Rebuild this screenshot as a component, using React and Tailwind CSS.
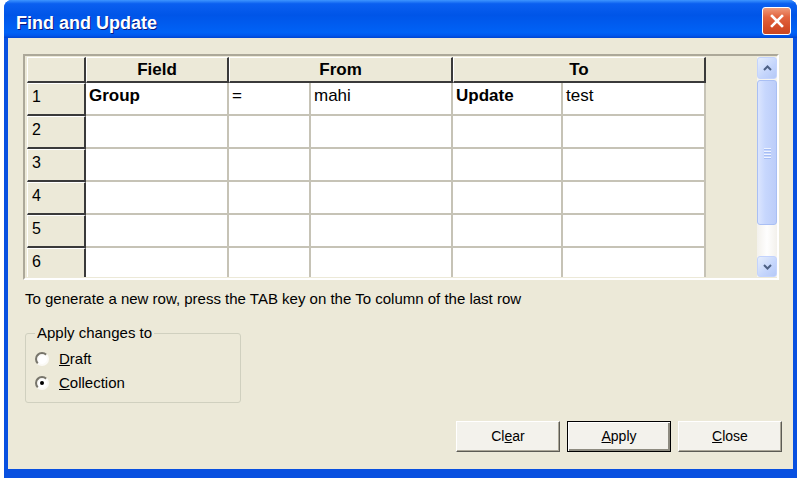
import React from 'react';

const ui = { fontFamily: '"Liberation Sans", Arial, sans-serif' };

const dataCols = ['w-[143px]', 'w-[82px]', 'w-[142px]', 'w-[110px]', 'w-[143px]'];

const rows = [
  [{ t: 'Group', b: true }, { t: '=' }, { t: 'mahi' }, { t: 'Update', b: true }, { t: 'test' }],
  [], [], [], [], [],
];

const HeaderCell = ({ className = '', children }) => (
  <div className={`flex items-center justify-center bg-[#ece9d8] border-t border-l border-t-white border-l-white border-r-2 border-b-2 border-r-[#3a3a3a] border-b-[#3a3a3a] text-[17px] font-bold text-black ${className}`}>
    {children}
  </div>
);

const Chevron = ({ down }) => (
  <svg width="9" height="6" viewBox="0 0 9 6">
    <path d={down ? 'M1 1 L4.5 4.5 L8 1' : 'M1 5 L4.5 1.5 L8 5'} fill="none" stroke="#4d6185" strokeWidth="2" />
  </svg>
);

const ScrollBar = () => (
  <div className="w-[20px] h-full flex flex-col bg-[#f5f4ef]">
    <div className="h-[22px] flex items-center justify-center rounded-[3px] border border-[#c3d3fd] bg-[linear-gradient(135deg,#e6eefc,#c4d5fc_60%,#b5c9f7)]">
      <Chevron />
    </div>
    <div className="mt-[1px] h-[145px] flex flex-col items-center justify-center gap-[2px] rounded-[3px] border border-[#a9bff4] bg-[linear-gradient(90deg,#dbe5fe,#c7d7fd_40%,#bccdf9)]">
      <div className="w-[7px] h-[1px] bg-[#eef3fe] shadow-[0_1px_0_#a5bdf5]" />
      <div className="w-[7px] h-[1px] bg-[#eef3fe] shadow-[0_1px_0_#a5bdf5]" />
      <div className="w-[7px] h-[1px] bg-[#eef3fe] shadow-[0_1px_0_#a5bdf5]" />
      <div className="w-[7px] h-[1px] bg-[#eef3fe] shadow-[0_1px_0_#a5bdf5]" />
    </div>
    <div className="flex-1 bg-[linear-gradient(90deg,#f3f1ec,#fefefe_50%,#f3f1ec)]" />
    <div className="h-[21px] flex items-center justify-center rounded-[3px] border border-[#c3d3fd] bg-[linear-gradient(135deg,#e6eefc,#c4d5fc_60%,#b5c9f7)]">
      <Chevron down />
    </div>
  </div>
);

const Radio = ({ checked }) => (
  <div className="w-[14px] h-[14px] shrink-0 rounded-full border-2 border-t-[#77756b] border-l-[#77756b] border-r-[#fbfaf6] border-b-[#fbfaf6] bg-[radial-gradient(circle_at_60%_60%,#fff_50%,#e9e7dc)] flex items-center justify-center">
    {checked && <div className="w-[4px] h-[4px] rounded-full bg-black" />}
  </div>
);

const Button = ({ children, primary }) => (
  <button
    type="button"
    className={`w-[104px] h-[31px] text-[14px] text-black bg-[#f3f2ec] ${
      primary
        ? 'border border-black shadow-[inset_1px_1px_0_#fff,inset_-2px_-2px_0_#8d8b80]'
        : 'border border-t-white border-l-white border-r-[#5c5b54] border-b-[#5c5b54] shadow-[inset_-1px_-1px_0_#aca899]'
    }`}
  >
    {children}
  </button>
);

export default function App() {
  return (
    <div className="w-[799px] h-[478px] bg-white overflow-hidden" style={ui}>
      <div className="ml-[4px] w-[793px] h-[478px] flex flex-col rounded-t-[8px] bg-[#0850e0] overflow-hidden">
        {/* title bar */}
        <div className="h-[38px] shrink-0 flex justify-between bg-[linear-gradient(180deg,#3d95ff,#0a5ff0_10%,#0055e8_40%,#0062f6_85%,#0058ee_93%,#0044d0)]">
          <div className="pt-[12px] pl-[12px] text-[18px] leading-[22px] font-bold text-white [text-shadow:1px_1px_0_#0a1a80]">
            Find and Update
          </div>
          <div className="mt-[7px] mr-[6px] w-[29px] h-[28px] rounded-[3px] border border-white flex items-center justify-center bg-[linear-gradient(180deg,#ee9a7a,#e2643f_35%,#d44d28_75%,#c94622)]">
            <svg width="16" height="16" viewBox="0 0 16 16">
              <path d="M3 3 L13 13 M13 3 L3 13" stroke="#fff" strokeWidth="2.6" strokeLinecap="square" />
            </svg>
          </div>
        </div>

        {/* body */}
        <div className="flex-1 mx-[4px] mb-[9px] bg-[#ece9d8] flex flex-col">
          <div className="mt-[16px] ml-[15px] mr-[14px] h-[226px] border-2 border-t-[#aca899] border-l-[#aca899] border-r-white border-b-white pt-[1px] pb-[1px] pl-[2px] flex">
            <div className="w-[679px] h-[220px] overflow-hidden">
              <div className="flex h-[26px]">
                <HeaderCell className="w-[59px]" />
                <HeaderCell className="w-[143px]">Field</HeaderCell>
                <HeaderCell className="w-[224px]">From</HeaderCell>
                <HeaderCell className="w-[253px]">To</HeaderCell>
              </div>
              {rows.map((r, i) => (
                <div key={i} className="flex h-[33px] shrink-0">
                  <div className="w-[59px] bg-[#ece9d8] border-l border-t border-l-white border-t-white border-r-2 border-b-2 border-r-[#3a3a3a] border-b-[#3a3a3a] pl-[4px] pt-[3px] text-[16px] leading-[20px] text-black">
                    {i + 1}
                  </div>
                  {dataCols.map((w, j) => (
                    <div
                      key={j}
                      className={`${w} bg-white border-r-2 border-b-2 border-[#c6c3b6] pl-[3px] pt-[3px] text-[17px] leading-[20px] text-black ${r[j] && r[j].b ? 'font-bold' : ''}`}
                    >
                      {r[j] ? r[j].t : ''}
                    </div>
                  ))}
                </div>
              ))}
            </div>
            <div className="flex-1" />
            <ScrollBar />
          </div>

          <div className="mt-[10px] ml-[17px] text-[15px] leading-[18px] text-black">
            To generate a new row, press the TAB key on the To column of the last row
          </div>

          <fieldset className="mt-[16px] ml-[17px] w-[216px] h-[79px] border border-[#d0d0bf] rounded-[3px] p-0">
            <legend className="ml-[9px] px-[2px] text-[15px] leading-[18px] text-black">Apply changes to</legend>
            <div className="mt-[5px] flex items-center h-[24px] pl-[9px] gap-[10px] text-[15px] text-black">
              <Radio />
              <span><span className="underline">D</span>raft</span>
            </div>
            <div className="flex items-center h-[24px] pl-[9px] gap-[10px] text-[15px] text-black">
              <Radio checked />
              <span><span className="underline">C</span>ollection</span>
            </div>
          </fieldset>

          <div className="mt-[18px] mr-[11px] flex justify-end gap-[7px]">
            <Button>Cl<span className="underline">e</span>ar</Button>
            <Button primary><span className="underline">A</span>pply</Button>
            <Button><span className="underline">C</span>lose</Button>
          </div>
        </div>
      </div>
    </div>
  );
}
